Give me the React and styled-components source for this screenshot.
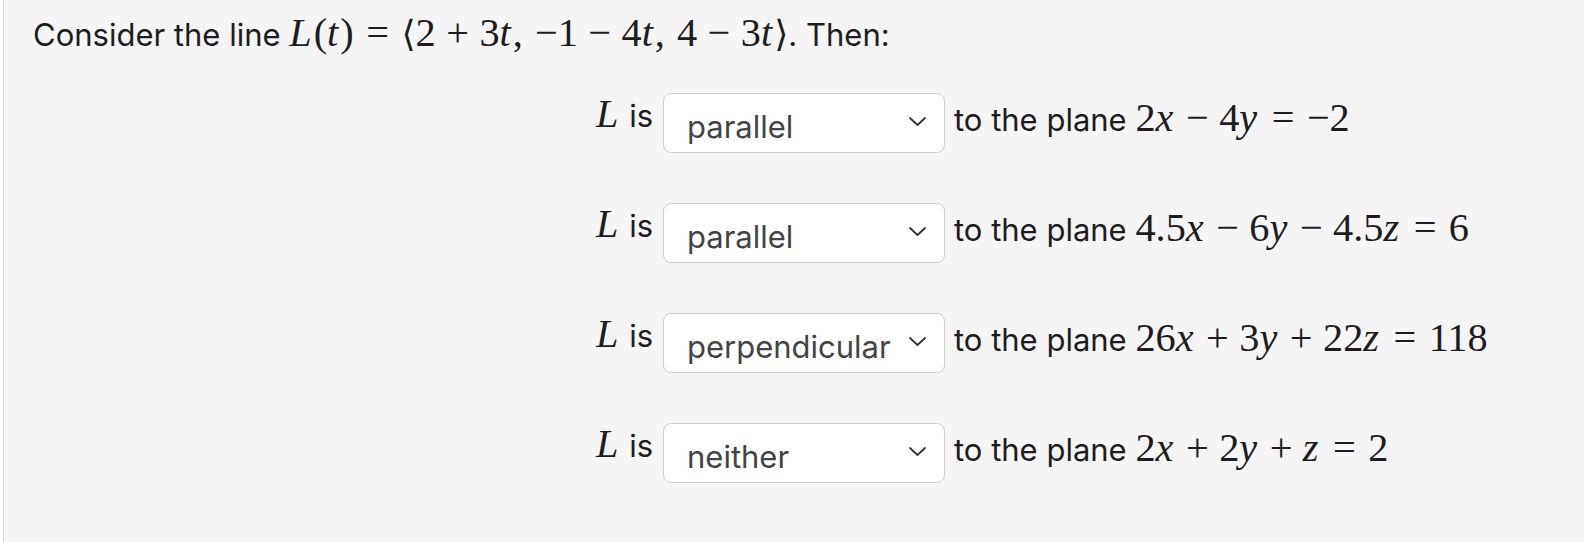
import React from 'react'
import styled, { createGlobalStyle } from 'styled-components'

const Global = createGlobalStyle`
  html, body {
    margin: 0;
    padding: 0;
    background: #ffffff;
  }
  body {
    font-family: Inter, 'Liberation Sans', sans-serif;
    color: #1d1d1f;
  }
`

const Panel = styled.div`
  margin-left: 3px;
  height: 542px;
  box-sizing: border-box;
  background: #f5f5f5;
  border-left: 1px solid #dedede;
  padding: 10px 0 0 29px;
  font-size: 31px;
  overflow: hidden;
`

const Intro = styled.p`
  margin: 0;
  line-height: 46px;
  white-space: nowrap;
`

const Rows = styled.div`
  display: grid;
  grid-template-columns: 76px 282px auto;
  column-gap: 10px;
  row-gap: 50px;
  justify-content: start;
  margin: 35px 0 0 544px;
`

const Label = styled.div`
  height: 60px;
  box-sizing: border-box;
  line-height: 36px;
  padding-top: 3px;
  text-align: right;
  white-space: nowrap;
`

const Tail = styled.div`
  height: 60px;
  box-sizing: border-box;
  line-height: 36px;
  padding-top: 7px;
  margin-left: -1px;
  white-space: nowrap;
`

const SelectWrap = styled.div`
  position: relative;
  height: 60px;
`

const Select = styled.select`
  appearance: none;
  -webkit-appearance: none;
  width: 100%;
  height: 100%;
  box-sizing: border-box;
  border: 1px solid #cfcfcf;
  border-radius: 8px;
  background: #ffffff;
  padding: 6px 40px 0 23px;
  font-family: Inter, 'Liberation Sans', sans-serif;
  font-size: 31px;
  color: #444444;
  outline: none;
`

const Chevron = styled.svg`
  position: absolute;
  right: 19px;
  top: 24px;
  width: 17px;
  height: 9px;
  pointer-events: none;
`

const M = styled.span`
  font-family: 'Liberation Serif', 'DejaVu Serif', serif;
  font-size: 1.3em;
  white-space: nowrap;
`

const V = styled.i`
  font-style: italic;
  margin-right: 0.05em;
`

const Bin = styled.span`
  margin: 0 0.26em;
`

const Rel = styled.span`
  margin: 0 0.31em;
`

const Sep = styled.span`
  display: inline-block;
  margin-right: 0.3em;
`

const Angle = styled.span`
  font-family: 'DejaVu Serif', serif;
  font-size: 0.9em;
`

const rows = [
  {
    choice: 'parallel',
    plane: (
      <>2<V>x</V><Bin>−</Bin>4<V>y</V><Rel>=</Rel>−2</>
    ),
  },
  {
    choice: 'parallel',
    plane: (
      <>4.5<V>x</V><Bin>−</Bin>6<V>y</V><Bin>−</Bin>4.5<V>z</V><Rel>=</Rel>6</>
    ),
  },
  {
    choice: 'perpendicular',
    plane: (
      <>26<V>x</V><Bin>+</Bin>3<V>y</V><Bin>+</Bin>22<V>z</V><Rel>=</Rel>118</>
    ),
  },
  {
    choice: 'neither',
    plane: (
      <>2<V>x</V><Bin>+</Bin>2<V>y</V><Bin>+</Bin><V>z</V><Rel>=</Rel>2</>
    ),
  },
]

const Row = ({ choice, plane }) => (
  <>
    <Label>
      <M><V>L</V></M> is
    </Label>
    <SelectWrap>
      <Select defaultValue={choice}>
        <option value="parallel">parallel</option>
        <option value="perpendicular">perpendicular</option>
        <option value="neither">neither</option>
      </Select>
      <Chevron viewBox="0 0 17 9">
        <path d="M1 1 L8.5 8 L16 1" fill="none" stroke="#333" strokeWidth="1.8" strokeLinecap="round" strokeLinejoin="round" />
      </Chevron>
    </SelectWrap>
    <Tail>
      to the plane <M>{plane}</M>
    </Tail>
  </>
)

const App = () => (
  <>
    <Global />
    <Panel>
      <Intro>
        Consider the line{' '}
        <M>
          <V>L</V>(<V>t</V>)<Rel>=</Rel><Angle>⟨</Angle>2<Bin>+</Bin>3<V>t</V><Sep>,</Sep>−1<Bin>−</Bin>4<V>t</V><Sep>,</Sep>4<Bin>−</Bin>3<V>t</V><Angle>⟩</Angle>
        </M>
        . Then:
      </Intro>
      <Rows>
        {rows.map((r, i) => (
          <Row key={i} {...r} />
        ))}
      </Rows>
    </Panel>
  </>
)

export default App
